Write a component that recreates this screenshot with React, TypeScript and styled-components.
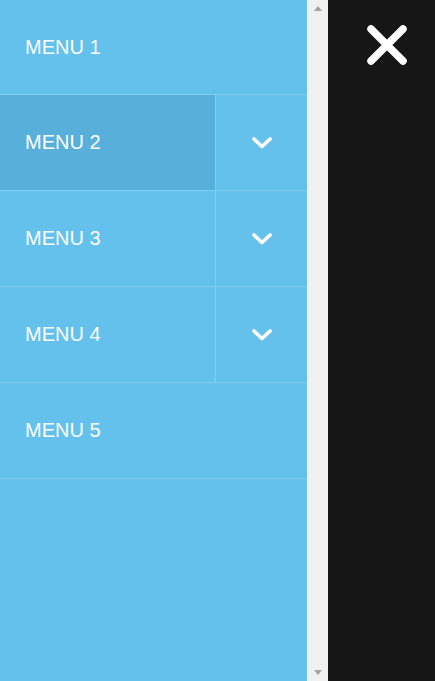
import React from 'react';
import styled, { createGlobalStyle } from 'styled-components';

const GlobalStyle = createGlobalStyle`
  html, body {
    margin: 0;
    padding: 0;
    height: 100%;
    background: #161616;
  }
  #root {
    height: 100%;
  }
`;

const Page = styled.div`
  display: flex;
  height: 100vh;
  overflow: hidden;
  font-family: 'Liberation Sans', Arial, sans-serif;
`;

const Panel = styled.nav`
  width: 307px;
  flex-shrink: 0;
  background: #64c1ec;
`;

const MenuList = styled.ul`
  list-style: none;
  margin: 0;
  padding: 0;
`;

const MenuItem = styled.li`
  display: flex;
  height: 95px;
  border-bottom: 1px solid rgba(255, 255, 255, 0.2);

  &:first-child {
    height: 94px;
  }
`;

const MenuLink = styled.a<{ $active?: boolean }>`
  flex: 1;
  display: flex;
  align-items: center;
  padding-left: 25px;
  color: #ffffff;
  font-size: 20px;
  text-decoration: none;
  background: ${props => (props.$active ? '#58afd9' : 'transparent')};
`;

const Toggle = styled.button`
  width: 92px;
  box-sizing: border-box;
  flex-shrink: 0;
  display: flex;
  align-items: center;
  justify-content: center;
  padding: 0;
  border: none;
  border-left: 1px solid rgba(255, 255, 255, 0.2);
  background: transparent;
  cursor: pointer;
`;

const Scrollbar = styled.div`
  width: 21px;
  flex-shrink: 0;
  background: #f1f1f1;
  display: flex;
  flex-direction: column;
  justify-content: space-between;
  align-items: center;
  padding: 6px 0;
  box-sizing: border-box;
`;

const Arrow = styled.span<{ $down?: boolean }>`
  width: 0;
  height: 0;
  border-left: 4.5px solid transparent;
  border-right: 4.5px solid transparent;
  ${props =>
    props.$down
      ? 'border-top: 5px solid #a3a3a3;'
      : 'border-bottom: 5px solid #a3a3a3;'}
`;

const Backdrop = styled.div`
  flex: 1;
  background: #161616;
  display: flex;
  justify-content: flex-end;
  align-items: flex-start;
`;

const CloseButton = styled.button`
  margin: 21px 24px 0 0;
  padding: 0;
  width: 48px;
  height: 48px;
  border: none;
  background: transparent;
  display: flex;
  align-items: center;
  justify-content: center;
  cursor: pointer;
`;

const Chevron = () => (
  <svg width="22" height="14" viewBox="0 0 22 14">
    <path
      d="M3 3 L11 10.5 L19 3"
      fill="none"
      stroke="#ffffff"
      strokeWidth="3.6"
      strokeLinecap="round"
      strokeLinejoin="round"
    />
  </svg>
);

const CloseIcon = () => (
  <svg width="44" height="44" viewBox="0 0 44 44">
    <path
      d="M6 6 L38 38 M38 6 L6 38"
      fill="none"
      stroke="#ffffff"
      strokeWidth="7.5"
      strokeLinecap="round"
    />
  </svg>
);

const menus = [
  { label: 'MENU 1', submenu: false },
  { label: 'MENU 2', submenu: true, active: true },
  { label: 'MENU 3', submenu: true },
  { label: 'MENU 4', submenu: true },
  { label: 'MENU 5', submenu: false },
];

const App: React.FC = () => {
  return (
    <>
      <GlobalStyle />
      <Page>
        <Panel>
          <MenuList>
            {menus.map((menu, index) => (
              <MenuItem key={index}>
                <MenuLink href="#" $active={menu.active}>
                  {menu.label}
                </MenuLink>
                {menu.submenu && (
                  <Toggle aria-label="Open submenu">
                    <Chevron />
                  </Toggle>
                )}
              </MenuItem>
            ))}
          </MenuList>
        </Panel>
        <Scrollbar>
          <Arrow />
          <Arrow $down />
        </Scrollbar>
        <Backdrop>
          <CloseButton aria-label="Close menu">
            <CloseIcon />
          </CloseButton>
        </Backdrop>
      </Page>
    </>
  );
};

export default App;
